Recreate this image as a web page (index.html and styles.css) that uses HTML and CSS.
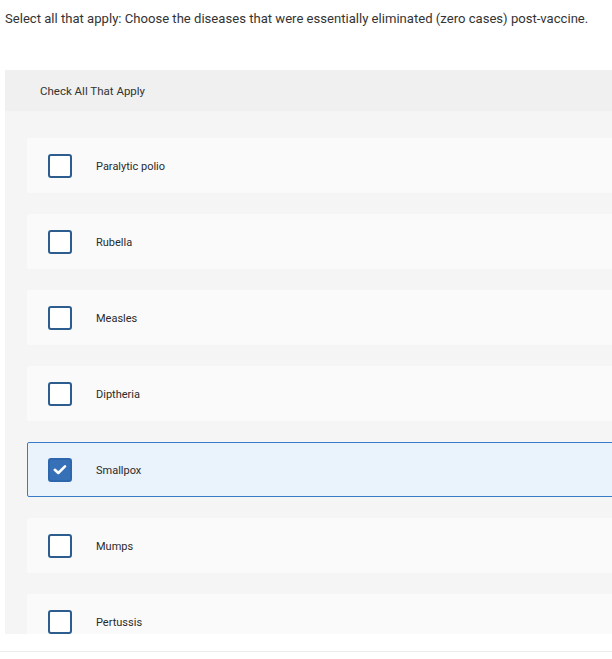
FILE: index.html
```
<!DOCTYPE html>
<html>
<head>
<meta charset="utf-8">
<link rel="stylesheet" href="styles.css">
</head>
<body>
<div class="page">
  <p class="prompt">Select all that apply: Choose the diseases that were essentially eliminated (zero cases) post-vaccine.</p>
  <div class="panel">
    <div class="panel-head">Check All That Apply</div>
    <div class="panel-body">
      <div class="choice"><span class="box"></span><span class="label">Paralytic polio</span></div>
      <div class="choice"><span class="box"></span><span class="label">Rubella</span></div>
      <div class="choice"><span class="box"></span><span class="label">Measles</span></div>
      <div class="choice"><span class="box"></span><span class="label">Diptheria</span></div>
      <div class="choice selected"><span class="box checked"><svg viewBox="2 2 20 20" width="20" height="20"><path d="M6.8 11.8 L10.3 15 L17 8.4" fill="none" stroke="#fff" stroke-width="2.6" stroke-linecap="round" stroke-linejoin="round"/></svg></span><span class="label">Smallpox</span></div>
      <div class="choice"><span class="box"></span><span class="label">Mumps</span></div>
      <div class="choice"><span class="box"></span><span class="label">Pertussis</span></div>
    </div>
  </div>
  <div class="rule"></div>
</div>
</body>
</html>
```
FILE: styles.css
```
html, body {
  margin: 0;
  padding: 0;
  background: #fff;
  overflow: hidden;
}
.page {
  width: 612px;
  height: 659px;
  overflow: hidden;
  font-family: Roboto, "Liberation Sans", sans-serif;
  color: #333;
}
.prompt {
  margin: 0;
  padding: 9px 5px 0 5px;
  height: 20px;
  font-size: 13.1px;
  line-height: 20px;
  white-space: nowrap;
  color: #333;
}
.panel {
  margin: 41px 0 0 5px;
}
.panel-head {
  height: 41px;
  box-sizing: border-box;
  padding: 1px 0 0 35px;
  line-height: 40px;
  background: #f0f0f0;
  font-size: 11.5px;
  color: #333;
}
.panel-body {
  background: #f5f5f5;
  height: 523px;
  box-sizing: border-box;
  padding: 27px 0 0 22px;
  overflow: hidden;
  display: flex;
  flex-direction: column;
  gap: 21px;
}
.choice {
  flex: 0 0 55px;
  box-sizing: border-box;
  margin-right: -10px;
  background: #fafafa;
  border: 1px solid transparent;
  border-radius: 2px;
  display: flex;
  align-items: center;
  padding-left: 20px;
}
.choice.selected {
  background: #eaf2fc;
  border-color: #3a7bc8;
}
.box {
  width: 24px;
  height: 24px;
  box-sizing: border-box;
  border: 2px solid #2c5d8e;
  border-radius: 3px;
  background: #fff;
  display: flex;
  align-items: center;
  justify-content: center;
  flex: 0 0 auto;
}
.box.checked {
  background: #3671b8;
  border-color: #2d66ad;
}
.label {
  margin-left: 24px;
  padding-top: 2px;
  font-size: 11px;
  color: #2a2a2a;
}
.rule {
  margin-top: 17px;
  height: 1px;
  background: #ececec;
}
```
